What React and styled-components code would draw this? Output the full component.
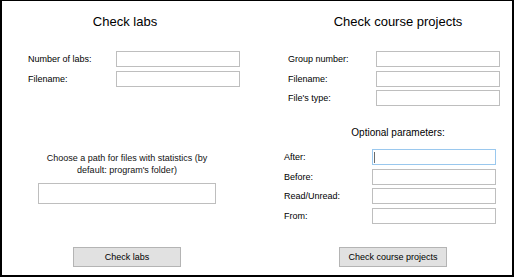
import React from "react";
import styled, { createGlobalStyle } from "styled-components";

const Global = createGlobalStyle`
  html, body { margin: 0; padding: 0; background: #ffffff; }
  body { font-family: "Liberation Sans", Arial, sans-serif; color: #000; }
`;

const Window = styled.div`
  box-sizing: border-box;
  width: 514px;
  height: 277px;
  border-style: solid;
  border-color: #000;
  border-width: 1px 2px 2px 2px;
  background: #fff;
  display: grid;
  grid-template-columns: 250px 1fr;
`;

const Column = styled.div`
  display: flex;
  flex-direction: column;
  padding: 13px 0 8px ${(p) => p.$padLeft || 0}px;
  min-width: 0;
`;

const Title = styled.div`
  font-size: 13px;
  line-height: 16px;
  text-align: center;
  margin-left: ${(p) => p.$shift || 0}px;
`;

const Form = styled.div`
  display: grid;
  grid-template-columns: 88px 124px;
  row-gap: 3.5px;
  margin-top: ${(p) => p.$top}px;
  padding-left: ${(p) => p.$indent}px;
`;

const Label = styled.div`
  font-size: 9px;
  line-height: 16px;
  align-self: center;
  white-space: nowrap;
`;

const TextBox = styled.div`
  box-sizing: border-box;
  width: ${(p) => p.$w || 124}px;
  height: ${(p) => p.$h || 16}px;
  border: 1px solid ${(p) => (p.$focused ? "#9ac8ee" : "#bebebe")};
  background: #fff;
  display: flex;
  align-items: center;
  padding-left: 1px;
`;

const Caret = styled.span`
  width: 1px;
  height: 11px;
  background: #6b6b6b;
`;

const Note = styled.div`
  font-size: 9px;
  line-height: 12px;
  text-align: center;
  margin-top: ${(p) => p.$top}px;
  color: #111;
`;

const Subtitle = styled.div`
  font-size: 10px;
  line-height: 12px;
  text-align: center;
  margin-top: ${(p) => p.$top}px;
`;

const PathBox = styled(TextBox)`
  margin-top: 7px;
  align-self: center;
`;

const Button = styled.button`
  box-sizing: border-box;
  margin-top: auto;
  width: 108px;
  height: 20px;
  background: #e1e1e1;
  border: 1px solid #b4b4b4;
  font-family: "Liberation Sans", Arial, sans-serif;
  font-size: 9px;
  color: #000;
  padding: 0;
  align-self: ${(p) => (p.$offset != null ? "flex-start" : "center")};
  margin-left: ${(p) => p.$offset || 0}px;
`;

const Row = ({ label, focused }) => (
  <>
    <Label>{label}</Label>
    <TextBox $focused={focused}>{focused && <Caret />}</TextBox>
  </>
);

export default function App() {
  return (
    <>
      <Global />
      <Window>
        <Column>
          <Title $shift={-4}>Check labs</Title>
          <Form $top={21} $indent={26}>
            <Row label="Number of labs:" />
            <Row label="Filename:" />
          </Form>
          <Note $top={65}>
            Choose a path for files with statistics (by
            <br />
            default: program's folder)
          </Note>
          <PathBox $w={178} $h={21} />
          <Button>Check labs</Button>
        </Column>
        <Column $padLeft={32}>
          <Title>Check course projects</Title>
          <Form $top={21} $indent={4}>
            <Row label="Group number:" />
            <Row label="Filename:" />
            <Row label="File's type:" />
          </Form>
          <Subtitle $top={21}>Optional parameters:</Subtitle>
          <Form $top={10} $indent={-1}>
            <Row label="After:" focused />
            <Row label="Before:" />
            <Row label="Read/Unread:" />
            <Row label="From:" />
          </Form>
          <Button $offset={55}>Check course projects</Button>
        </Column>
      </Window>
    </>
  );
}
